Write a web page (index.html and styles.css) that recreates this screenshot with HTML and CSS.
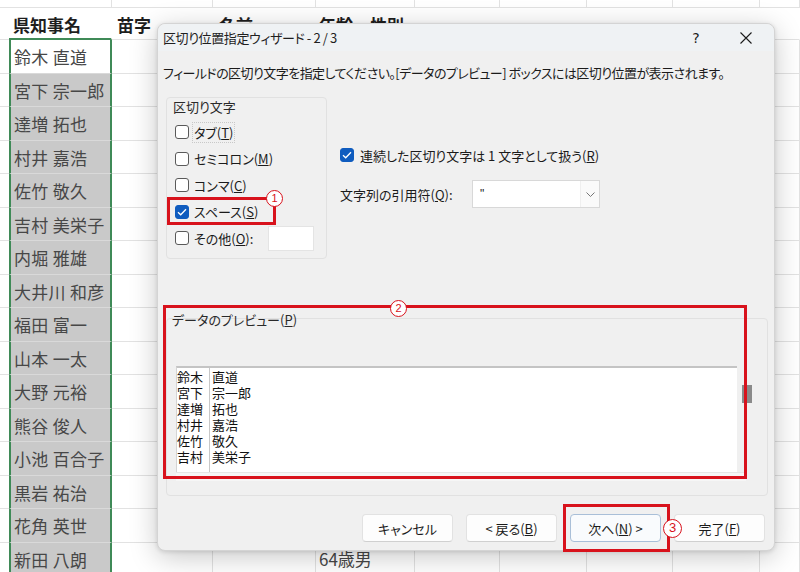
FILE: index.html
```html
<!DOCTYPE html>
<html lang="ja">
<head>
<meta charset="utf-8">
<link rel="stylesheet" href="styles.css">
</head>
<body>
<div class="sheet">
  <div class="row top"><div class="c c0"></div><div class="c c1"></div><div class="c c2"></div><div class="c c3"></div><div class="c c4"></div><div class="c c5"></div><div class="c c6"></div><div class="c c7"></div><div class="c c8"></div><div class="c c9"></div></div>
  <div class="row head"><div class="c c0"></div><div class="c c1">県知事名</div><div class="c c2">苗字</div><div class="c c3">名前</div><div class="c c4">年齢・性別</div><div class="c c5"></div><div class="c c6"></div><div class="c c7"></div><div class="c c8"></div><div class="c c9"></div></div>
  <div class="row data"><div class="c c0"></div><div class="c c1 name active">鈴木 直道</div><div class="c c2"></div><div class="c c3"></div><div class="c c4"></div><div class="c c5"></div><div class="c c6"></div><div class="c c7"></div><div class="c c8"></div><div class="c c9"></div></div>
  <div class="row data"><div class="c c0"></div><div class="c c1 name">宮下 宗一郎</div><div class="c c2"></div><div class="c c3"></div><div class="c c4"></div><div class="c c5"></div><div class="c c6"></div><div class="c c7"></div><div class="c c8"></div><div class="c c9"></div></div>
  <div class="row data"><div class="c c0"></div><div class="c c1 name">達増 拓也</div><div class="c c2"></div><div class="c c3"></div><div class="c c4"></div><div class="c c5"></div><div class="c c6"></div><div class="c c7"></div><div class="c c8"></div><div class="c c9"></div></div>
  <div class="row data"><div class="c c0"></div><div class="c c1 name">村井 嘉浩</div><div class="c c2"></div><div class="c c3"></div><div class="c c4"></div><div class="c c5"></div><div class="c c6"></div><div class="c c7"></div><div class="c c8"></div><div class="c c9"></div></div>
  <div class="row data"><div class="c c0"></div><div class="c c1 name">佐竹 敬久</div><div class="c c2"></div><div class="c c3"></div><div class="c c4"></div><div class="c c5"></div><div class="c c6"></div><div class="c c7"></div><div class="c c8"></div><div class="c c9"></div></div>
  <div class="row data"><div class="c c0"></div><div class="c c1 name">吉村 美栄子</div><div class="c c2"></div><div class="c c3"></div><div class="c c4"></div><div class="c c5"></div><div class="c c6"></div><div class="c c7"></div><div class="c c8"></div><div class="c c9"></div></div>
  <div class="row data"><div class="c c0"></div><div class="c c1 name">内堀 雅雄</div><div class="c c2"></div><div class="c c3"></div><div class="c c4"></div><div class="c c5"></div><div class="c c6"></div><div class="c c7"></div><div class="c c8"></div><div class="c c9"></div></div>
  <div class="row data"><div class="c c0"></div><div class="c c1 name">大井川 和彦</div><div class="c c2"></div><div class="c c3"></div><div class="c c4"></div><div class="c c5"></div><div class="c c6"></div><div class="c c7"></div><div class="c c8"></div><div class="c c9"></div></div>
  <div class="row data"><div class="c c0"></div><div class="c c1 name">福田 富一</div><div class="c c2"></div><div class="c c3"></div><div class="c c4"></div><div class="c c5"></div><div class="c c6"></div><div class="c c7"></div><div class="c c8"></div><div class="c c9"></div></div>
  <div class="row data"><div class="c c0"></div><div class="c c1 name">山本 一太</div><div class="c c2"></div><div class="c c3"></div><div class="c c4"></div><div class="c c5"></div><div class="c c6"></div><div class="c c7"></div><div class="c c8"></div><div class="c c9"></div></div>
  <div class="row data"><div class="c c0"></div><div class="c c1 name">大野 元裕</div><div class="c c2"></div><div class="c c3"></div><div class="c c4"></div><div class="c c5"></div><div class="c c6"></div><div class="c c7"></div><div class="c c8"></div><div class="c c9"></div></div>
  <div class="row data"><div class="c c0"></div><div class="c c1 name">熊谷 俊人</div><div class="c c2"></div><div class="c c3"></div><div class="c c4"></div><div class="c c5"></div><div class="c c6"></div><div class="c c7"></div><div class="c c8"></div><div class="c c9"></div></div>
  <div class="row data"><div class="c c0"></div><div class="c c1 name">小池 百合子</div><div class="c c2"></div><div class="c c3"></div><div class="c c4"></div><div class="c c5"></div><div class="c c6"></div><div class="c c7"></div><div class="c c8"></div><div class="c c9"></div></div>
  <div class="row data"><div class="c c0"></div><div class="c c1 name">黒岩 祐治</div><div class="c c2"></div><div class="c c3"></div><div class="c c4"></div><div class="c c5"></div><div class="c c6"></div><div class="c c7"></div><div class="c c8"></div><div class="c c9"></div></div>
  <div class="row data"><div class="c c0"></div><div class="c c1 name">花角 英世</div><div class="c c2"></div><div class="c c3"></div><div class="c c4"></div><div class="c c5"></div><div class="c c6"></div><div class="c c7"></div><div class="c c8"></div><div class="c c9"></div></div>
  <div class="row data"><div class="c c0"></div><div class="c c1 name">新田 八朗</div><div class="c c2"></div><div class="c c3"></div><div class="c c4 val">64歳男</div><div class="c c5"></div><div class="c c6"></div><div class="c c7"></div><div class="c c8"></div><div class="c c9"></div></div>
</div>

<div class="dialog">
  <div class="titlebar">
    <span class="title">区切り位置指定ウィザード - 2 / 3</span>
    <span class="help">?</span>
    <span class="close"><svg width="12" height="12" viewBox="0 0 12 12"><path d="M0.5 0.5 L11.5 11.5 M11.5 0.5 L0.5 11.5" stroke="#1a1a1a" stroke-width="1.1" fill="none"/></svg></span>
  </div>
  <p class="instr">フィールドの区切り文字を指定してください。[データのプレビュー] ボックスには区切り位置が表示されます。</p>
  <div class="options">
    <div class="group delim">
      <div class="legend">区切り文字</div>
      <div class="chk"><span class="box"></span><span class="focus">タブ(<u>T</u>)</span></div>
      <div class="chk"><span class="box"></span>セミコロン(<u>M</u>)</div>
      <div class="chk"><span class="box"></span>コンマ(<u>C</u>)</div>
      <div class="chk"><span class="box on"><svg width="10" height="8" viewBox="0 0 10 8"><path d="M1 4.2 L3.7 6.8 L9 1.2" stroke="#fff" stroke-width="1.3" fill="none"/></svg></span>スペース(<u>S</u>)</div>
      <div class="chk"><span class="box"></span>その他(<u>O</u>):<span class="other"></span></div>
    </div>
    <div class="right">
      <div class="chk wide"><span class="box on"><svg width="10" height="8" viewBox="0 0 10 8"><path d="M1 4.2 L3.7 6.8 L9 1.2" stroke="#fff" stroke-width="1.3" fill="none"/></svg></span>連続した区切り文字は 1 文字として扱う(<u>R</u>)</div>
      <div class="quote">
        <span class="qlabel">文字列の引用符(<u>Q</u>):</span>
        <div class="combo"><span class="cval">"</span><span class="arrow"><svg width="9" height="5" viewBox="0 0 9 5"><path d="M0.5 0.5 L4.5 4.5 L8.5 0.5" stroke="#777" stroke-width="1" fill="none"/></svg></span></div>
      </div>
    </div>
  </div>
  <div class="group preview">
    <div class="legend">データのプレビュー(<u>P</u>)</div>
    <div class="pv-body">
      <div class="pv-box">
        <div class="pv-col first">鈴木<br>宮下<br>達増<br>村井<br>佐竹<br>吉村</div>
        <div class="pv-col">直道<br>宗一郎<br>拓也<br>嘉浩<br>敬久<br>美栄子</div>
      </div>
      <div class="vscroll"><div class="thumb"></div></div>
    </div>
    <div class="hscroll"><span class="dot"></span><span class="dot"></span></div>
  </div>
  <div class="buttons">
    <div class="btn">キャンセル</div>
    <div class="btn">&lt; 戻る(<u>B</u>)</div>
    <div class="btn default">次へ(<u>N</u>) &gt;</div>
    <div class="btn">完了(<u>F</u>)</div>
  </div>

  <div class="mark m1"></div>
  <div class="badge b1">1</div>
  <div class="mark m2"></div>
  <div class="badge b2">2</div>
  <div class="mark m3"></div>
  <div class="badge b3">3</div>
</div>
</body>
</html>
```
FILE: styles.css
```css
html, body {
  margin: 0;
  padding: 0;
}
body {
  width: 800px;
  height: 572px;
  overflow: hidden;
  background: #ffffff;
  font-family: "Noto Sans CJK JP", "Noto Sans", sans-serif;
  position: relative;
}

/* ---------- spreadsheet ---------- */
.sheet {
  display: flex;
  flex-direction: column;
}
.row {
  display: flex;
  flex: none;
}
.row.top { height: 8px; }
.row.head { height: 32px; }
.row.data { height: 33.5px; }
.c {
  flex: none;
  box-sizing: border-box;
  border-right: 1px solid #e2e2e2;
  border-bottom: 1px solid #e2e2e2;
  display: flex;
  align-items: center;
  font-size: 17px;
  color: #3a3a3a;
  white-space: nowrap;
  overflow: hidden;
}
.c0 { width: 9px; border-right: none; }
.c1 { width: 103px; }
.c2 { width: 101px; }
.c3 { width: 103px; }
.c4 { width: 99px; }
.c5 { width: 85px; }
.c6 { width: 87px; }
.c7 { width: 86px; }
.c8 { width: 87px; }
.c9 { flex: 1; }

.head .c {
  font-weight: bold;
  color: #1e1e1e;
  border-right-color: transparent;
  padding-top: 2px;
}
.head .c1 { padding-left: 4px; border-bottom: 2px solid #3f8a57; }
.head .c2 { padding-left: 5px; }
.head .c3 { padding-left: 6px; }
.head .c4 { padding-left: 3px; }

.name {
  background: #c9c9c9;
  border-left: 2px solid #3f8a57;
  border-right: 2px solid #3f8a57;
  border-bottom: 1px solid #d9d9d9;
  padding-left: 3px;
  padding-top: 1px;
  color: #474747;
  letter-spacing: 0.3px;
}
.name.active { background: #ffffff; }
.val { padding-left: 3px; color: #474747; }

/* ---------- dialog ---------- */
.dialog {
  position: absolute;
  left: 157px;
  top: 23px;
  width: 618px;
  height: 528px;
  box-sizing: border-box;
  background: #f0f0f0;
  border: 1px solid #d4d4d4;
  border-radius: 8px;
  box-shadow: 0 6px 28px rgba(0, 0, 0, 0.22), 0 1px 4px rgba(0, 0, 0, 0.12);
  font-size: 13px;
  color: #1b1b1b;
  font-feature-settings: "palt" 1;
  display: flex;
  flex-direction: column;
}
.titlebar {
  height: 27px;
  flex: none;
  display: flex;
  align-items: center;
  padding-left: 5px;
  background: #eff2f4;
  border-radius: 8px 8px 0 0;
}
.title { flex: 1; font-size: 13px; letter-spacing: -0.4px; color: #1f1f1f; }
.help { width: 20px; text-align: center; font-size: 14px; margin-right: 12px; font-family: "DejaVu Sans", sans-serif; }
.close { width: 56px; display: flex; justify-content: center; }

.instr {
  margin: 13px 0 0 5px;
  line-height: 18px;
  letter-spacing: -0.55px;
  flex: none;
}

.options {
  display: flex;
  margin-top: 15px;
  flex: none;
}
.group {
  box-sizing: border-box;
  border: 1px solid #e1e1e1;
  border-radius: 4px;
}
.group.delim {
  margin-left: 8px;
  width: 161px;
  height: 162px;
  padding-left: 8px;
}
.legend {
  line-height: 16px;
  margin-left: -2px;
  margin-top: 1px;
  color: #2a2a2a;
}
.delim .legend { margin-bottom: 4px; }
.chk {
  height: 26.5px;
  display: flex;
  align-items: center;
  white-space: nowrap;
}
.box {
  width: 14px;
  height: 14px;
  box-sizing: border-box;
  border: 1px solid #5a5a5a;
  border-radius: 3px;
  background: #ffffff;
  margin-right: 5px;
  display: flex;
  align-items: center;
  justify-content: center;
  flex: none;
}
.box.on {
  background: #0f5cbf;
  border-color: #0f5cbf;
}
.focus {
  outline: 1px dotted #c8c8c8;
  padding: 0 1px;
  margin-left: -1px;
}
.other {
  width: 46px;
  height: 25px;
  background: #ffffff;
  border: 1px solid #e4e4e4;
  box-sizing: border-box;
  margin-left: 15px;
}

.right {
  margin-left: 13px;
  padding-top: 48px;
}
.chk.wide { height: 20px; }
.chk.wide .box { margin-right: 6px; }
.quote {
  margin-top: 15px;
  display: flex;
  align-items: center;
}
.qlabel { width: 132px; }
.combo {
  width: 128px;
  height: 28px;
  box-sizing: border-box;
  background: #ffffff;
  border: 1px solid #d8d8d8;
  display: flex;
  align-items: center;
}
.cval { flex: 1; padding-left: 7px; font-family: "Liberation Sans", sans-serif; font-size: 12px; }
.arrow {
  width: 18px;
  height: 100%;
  display: flex;
  align-items: center;
  justify-content: center;
  background: #fafafa;
  border-left: 1px solid #efefef;
}

.group.preview {
  margin: 59px 0 0 8px;
  width: 602px;
  height: 178px;
  padding-left: 9px;
  flex: none;
}
.preview .legend {
  margin-top: -7px;
  margin-left: -4px;
}
.pv-body {
  display: flex;
  margin-top: 38px;
}
.pv-box {
  width: 561px;
  height: 106px;
  box-sizing: border-box;
  background: #ffffff;
  border-top: 2px solid #c4c4c4;
  border-left: 1px solid #d4d4d4;
  display: flex;
  font-size: 13px;
  line-height: 16px;
  color: #111;
  font-feature-settings: normal;
}
.pv-col { padding-top: 1px; }
.pv-col.first {
  width: 32px;
  border-right: 1px solid #c8c8c8;
  margin-right: 2px;
}
.vscroll { width: 20px; padding-left: 5px; padding-top: 19px; }
.thumb { width: 10px; height: 18px; background: #8a8a8a; }
.hscroll {
  height: 8px;
  margin-right: 21px;
  background: #f6f6f6;
  border-top: 1px solid #e6e6e6;
  display: flex;
  justify-content: space-between;
  align-items: center;
  padding: 0 8px 0 4px;
}
.dot { width: 2px; height: 2px; background: #999; }

.buttons {
  display: flex;
  justify-content: flex-end;
  gap: 13px;
  margin-top: 18px;
  padding-right: 9px;
}
.btn {
  width: 91px;
  height: 28px;
  box-sizing: border-box;
  background: #fdfdfd;
  border: 1px solid #e2e2e2;
  border-bottom-color: #d0d0d0;
  border-radius: 4px;
  display: flex;
  align-items: center;
  justify-content: center;
  color: #1b1b1b;
}
.btn.default {
  border-color: #a9bfd8;
  background: #f9fbfd;
}

/* ---------- annotations ---------- */
.mark {
  position: absolute;
  box-sizing: border-box;
  border: 3px solid #d8121c;
}
.m1 { left: 9px; top: 173px; width: 109px; height: 28px; }
.m2 { left: 5px; top: 281px; width: 584px; height: 174px; }
.m3 { left: 405px; top: 480px; width: 107px; height: 48px; }
.badge {
  position: absolute;
  width: 17px;
  height: 17px;
  box-sizing: border-box;
  border: 1.5px solid #d8121c;
  border-radius: 50%;
  background: #ffffff;
  color: #d8121c;
  font-family: "Liberation Sans", sans-serif;
  font-size: 11px;
  line-height: 14px;
  text-align: center;
}
.b1 { left: 108px; top: 166px; }
.b2 { left: 232px; top: 276px; }
.b3 { left: 505px; top: 495px; width: 19px; height: 19px; line-height: 16px; font-size: 13px; }
```
